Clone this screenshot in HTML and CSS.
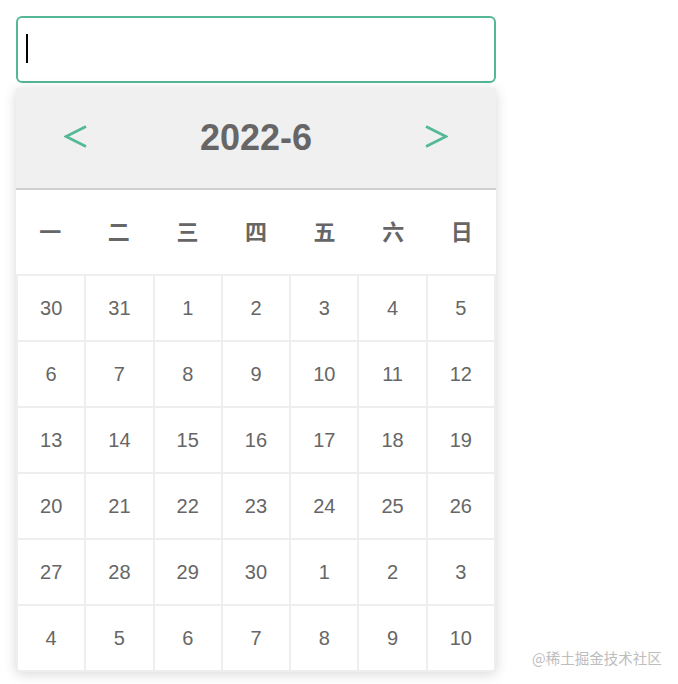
FILE: index.html
```html
<!DOCTYPE html>
<html lang="zh">
<head>
<meta charset="utf-8">
<title>Date picker</title>
<link rel="stylesheet" href="styles.css">
</head>
<body>
<div class="picker">
  <div class="input"><span class="caret"></span></div>
  <div class="panel">
    <div class="head">
      <svg class="arrow" width="24" height="24" viewBox="0 0 24 24"><polyline points="22,1.5 2,11.5 22,21.5" fill="none" stroke="#52b896" stroke-width="2.6"/></svg>
      <div class="title">2022-6</div>
      <svg class="arrow" width="24" height="24" viewBox="0 0 24 24"><polyline points="2,1.5 22,11.5 2,21.5" fill="none" stroke="#52b896" stroke-width="2.6"/></svg>
    </div>
    <div class="weeks">
      <span>一</span><span>二</span><span>三</span><span>四</span><span>五</span><span>六</span><span>日</span>
    </div>
    <div class="days">
      <div class="day">30</div><div class="day">31</div><div class="day">1</div><div class="day">2</div><div class="day">3</div><div class="day">4</div><div class="day">5</div>
      <div class="day">6</div><div class="day">7</div><div class="day">8</div><div class="day">9</div><div class="day">10</div><div class="day">11</div><div class="day">12</div>
      <div class="day">13</div><div class="day">14</div><div class="day">15</div><div class="day">16</div><div class="day">17</div><div class="day">18</div><div class="day">19</div>
      <div class="day">20</div><div class="day">21</div><div class="day">22</div><div class="day">23</div><div class="day">24</div><div class="day">25</div><div class="day">26</div>
      <div class="day">27</div><div class="day">28</div><div class="day">29</div><div class="day">30</div><div class="day">1</div><div class="day">2</div><div class="day">3</div>
      <div class="day">4</div><div class="day">5</div><div class="day">6</div><div class="day">7</div><div class="day">8</div><div class="day">9</div><div class="day">10</div>
    </div>
  </div>
</div>
<div class="watermark">@稀土掘金技术社区</div>
</body>
</html>
```
FILE: styles.css
```css
html, body {
  margin: 0;
  padding: 0;
  background: #fff;
}
body {
  padding: 16px;
  font-family: "Liberation Sans", "Noto Sans CJK SC", sans-serif;
  color: #666;
}
.picker {
  width: 480px;
}
.input {
  box-sizing: border-box;
  height: 67px;
  border: 2px solid #55b797;
  border-radius: 6px;
  display: flex;
  align-items: center;
  padding-left: 8px;
}
.caret {
  display: block;
  width: 2px;
  height: 29px;
  background: #000;
  margin-top: -2px;
}
.panel {
  margin-top: 5px;
  background: #fff;
  box-shadow: 0 2px 12px rgba(0, 0, 0, 0.16);
}
.head {
  height: 100px;
  background: #f0f0f0;
  border-bottom: 2px solid #cfcfcf;
  display: flex;
  align-items: center;
  justify-content: space-between;
  padding: 0 48px;
}
.arrow {
  display: block;
  width: 24px;
  height: 24px;
  margin-top: -2px;
}
.title {
  font-size: 36px;
  font-weight: bold;
  color: #666;
  margin-top: -1px;
}
.weeks {
  box-sizing: border-box;
  height: 84px;
  padding-bottom: 4px;
  display: grid;
  grid-template-columns: repeat(7, 1fr);
  align-items: center;
  justify-items: center;
  font-family: "Noto Sans CJK SC", sans-serif;
  font-size: 22px;
  font-weight: bold;
  color: #666;
}
.days {
  display: grid;
  grid-template-columns: repeat(7, 1fr);
  border: 1px solid #eeeeee;
}
.day {
  height: 64px;
  border: 1px solid #eeeeee;
  display: flex;
  align-items: center;
  justify-content: center;
  font-size: 20px;
  color: #666;
}
.watermark {
  position: absolute;
  left: 532px;
  top: 647px;
  font-family: "Noto Sans CJK SC", sans-serif;
  font-size: 14.5px;
  color: #bdbdbd;
}
```
